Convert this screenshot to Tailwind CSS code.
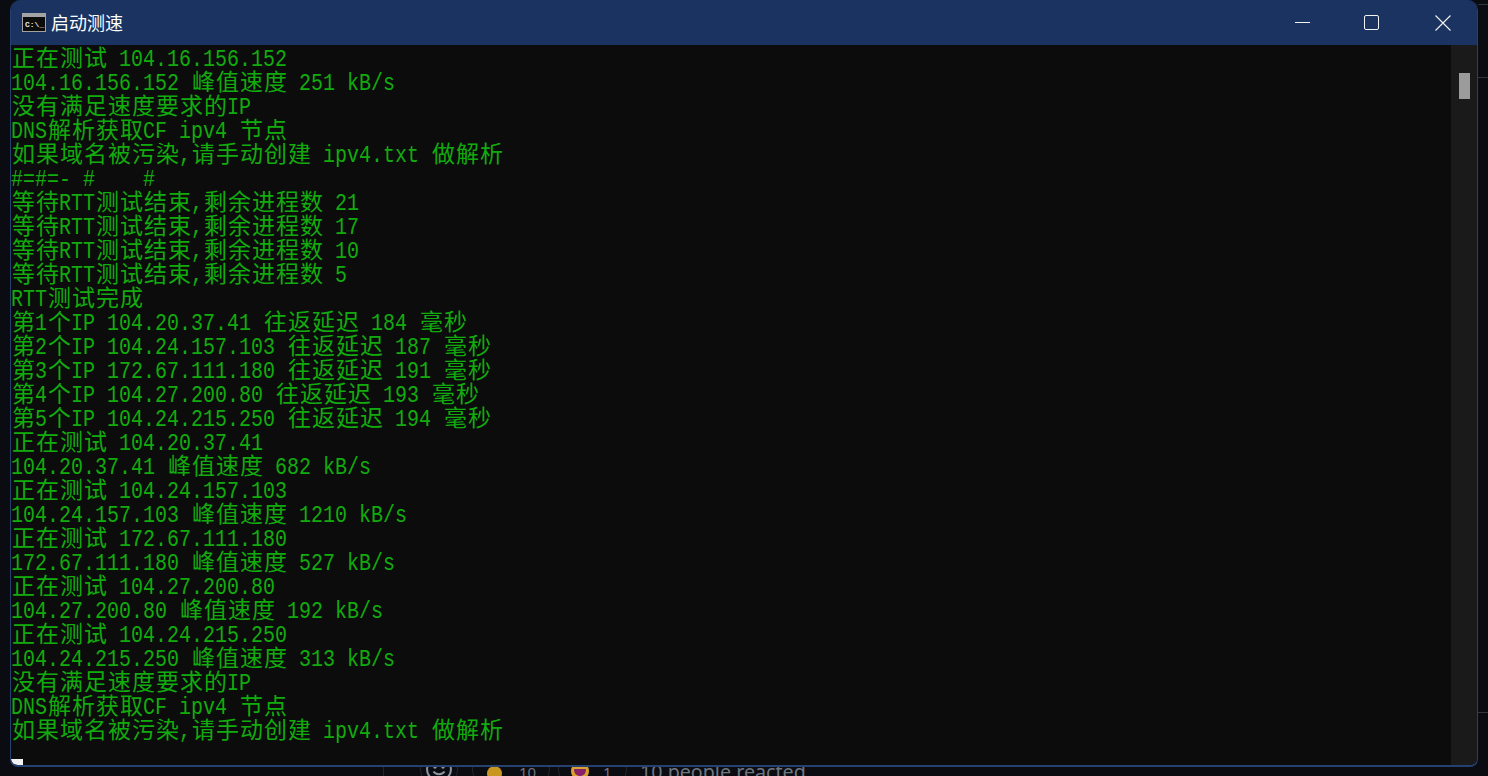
<!DOCTYPE html>
<html lang="zh-CN">

<head>
  <meta charset="UTF-8">
  <title>启动测速</title>
  <script src="https://cdn.jsdelivr.net/npm/@tailwindcss/browser@4"></script>
</head>

<body class="relative w-[1488px] h-[776px] overflow-hidden bg-[#0a0c12]">
  <!-- page behind the console window -->
  <div class="absolute left-[383px] top-0 w-px h-full bg-[#21262d]"></div>
  <div class="absolute left-[1478px] top-[4px] w-[10px] h-px bg-[#30363d]"></div>
  <div class="absolute left-[1478px] top-[77px] w-[10px] h-px bg-[#30363d]"></div>
  <div class="absolute left-[1478px] top-[712px] w-[10px] h-px bg-[#30363d]"></div>
  <div class="absolute left-[420px] top-[750px] flex items-center h-[38px] text-[19.7px] text-[#6e7681] font-['Noto_Sans',sans-serif] whitespace-pre">
    <div class="w-[38px] h-[38px] rounded-full border border-[#21262d] flex items-center justify-center">
      <svg width="26" height="26" viewBox="0 0 26 26" fill="none" stroke="#8b949e" stroke-width="2">
        <circle cx="13" cy="13" r="12" />
        <circle cx="9" cy="11" r="0.8" fill="#8b949e" />
        <circle cx="17" cy="11" r="0.8" fill="#8b949e" />
        <path d="M7.5 15.5C9.5 19 16.5 19 18.5 15.5" />
      </svg>
    </div>
    <div class="ml-[14px] w-[78px] h-[38px] rounded-full border border-[#21262d] flex items-center pl-[14px]">
      <div class="w-[15px] h-[15px] mt-[8px] rounded-full bg-[#c9971f]"></div>
      <span class="ml-[17px] mt-[6px] text-[15px]">10</span>
    </div>
    <div class="ml-[8px] w-[69px] h-[38px] rounded-full border border-[#21262d] flex items-center pl-[12px]">
      <svg class="mt-[6px]" width="18" height="20" viewBox="0 0 18 20">
        <circle cx="9" cy="9" r="9" fill="#d9a22e" />
        <path d="M3 7H15C15 12 12 14 9 14C6 14 3 12 3 7Z" fill="#8a1f6a" />
      </svg>
      <span class="ml-[14px] mt-[6px] text-[15px]">1</span>
    </div>
    <span class="ml-[13px] mt-[6px]">10 people reacted</span>
  </div>

  <!-- console window -->
  <div class="absolute left-[10px] top-0 w-[1468px] h-[767px] flex flex-col overflow-hidden rounded-t-[10px] rounded-b-[8px] border-x border-b-2 border-[#26406f] bg-[#0c0c0c]">
    <div class="relative z-10 h-[45px] shrink-0 flex items-center bg-[#1a3360] text-white">
      <svg class="ml-[11px]" width="24" height="19" viewBox="0 0 24 19">
        <rect x="0" y="0" width="24" height="19" fill="#a3a3a3" />
        <rect x="1" y="4" width="22" height="14" fill="#0c0c0c" />
        <text x="3" y="14" font-family="Liberation Mono" font-size="8" font-weight="700" fill="#e8e8e8">C:\_</text>
      </svg>
      <span class="ml-[5px] mb-[2px] text-[18px] leading-none font-['Noto_Sans_CJK_SC',sans-serif]">启动测速</span>
      <div class="ml-auto mr-[26px] flex items-center">
        <svg width="15" height="15" viewBox="0 0 15 15">
          <path d="M0 7.5H15" stroke="#f2f2f2" stroke-width="1" />
        </svg>
        <svg class="ml-[54px]" width="15" height="15" viewBox="0 0 15 15">
          <rect x="0.5" y="0.5" width="14" height="14" rx="1.5" fill="none" stroke="#f2f2f2" stroke-width="1" />
        </svg>
        <svg class="ml-[56px]" width="16" height="16" viewBox="0 0 16 16">
          <path d="M0.5 0.5L15.5 15.5M15.5 0.5L0.5 15.5" stroke="#f2f2f2" stroke-width="1.1" />
        </svg>
      </div>
    </div>
    <div class="relative flex-1 flex min-h-0">
      <div id="output" class="flex-1 -mt-px pl-px text-[#12ab0e] text-[23px] leading-[24px] font-['Noto_Sans_CJK_SC',sans-serif]"></div>
      <div class="w-[26px] shrink-0 bg-[#1a1a1a] pt-[28px] pl-[8px]">
        <div class="w-[11px] h-[26px] bg-[#9b9b9b]"></div>
      </div>
      <div class="absolute left-0 bottom-0 w-[12px] h-[6px] rounded-bl-[6px] bg-[#f2f2f2]"></div>
    </div>
  </div>

  <script>
    const lines = [
      '正在测试 104.16.156.152',
      '104.16.156.152 峰值速度 251 kB/s',
      '没有满足速度要求的IP',
      'DNS解析获取CF ipv4 节点',
      '如果域名被污染,请手动创建 ipv4.txt 做解析',
      '#=#=- #    #',
      '等待RTT测试结束,剩余进程数 21',
      '等待RTT测试结束,剩余进程数 17',
      '等待RTT测试结束,剩余进程数 10',
      '等待RTT测试结束,剩余进程数 5',
      'RTT测试完成',
      '第1个IP 104.20.37.41 往返延迟 184 毫秒',
      '第2个IP 104.24.157.103 往返延迟 187 毫秒',
      '第3个IP 172.67.111.180 往返延迟 191 毫秒',
      '第4个IP 104.27.200.80 往返延迟 193 毫秒',
      '第5个IP 104.24.215.250 往返延迟 194 毫秒',
      '正在测试 104.20.37.41',
      '104.20.37.41 峰值速度 682 kB/s',
      '正在测试 104.24.157.103',
      '104.24.157.103 峰值速度 1210 kB/s',
      '正在测试 172.67.111.180',
      '172.67.111.180 峰值速度 527 kB/s',
      '正在测试 104.27.200.80',
      '104.27.200.80 峰值速度 192 kB/s',
      '正在测试 104.24.215.250',
      '104.24.215.250 峰值速度 313 kB/s',
      '没有满足速度要求的IP',
      'DNS解析获取CF ipv4 节点',
      '如果域名被污染,请手动创建 ipv4.txt 做解析',
    ];

    // console cells: CJK takes two columns (24px), ascii one (12px)
    // ascii is stretched a bit since the console font is taller than Liberation Mono
    const output = document.getElementById('output');
    lines.forEach((line) => {
      const row = document.createElement('div');
      row.className = 'h-[24px] whitespace-pre';
      line.split(/([\u4e00-\u9fff]+)/).forEach((part) => {
        if (!part) return;
        const span = document.createElement('span');
        if (/[\u4e00-\u9fff]/.test(part)) {
          span.className = 'tracking-[1px]';
        } else {
          span.className = "inline-block -translate-x-px scale-y-[1.2] origin-[50%_78%] text-[20px] font-['Liberation_Mono',monospace]";
        }
        span.textContent = part;
        row.appendChild(span);
      });
      output.appendChild(row);
    });
  </script>
</body>

</html>
